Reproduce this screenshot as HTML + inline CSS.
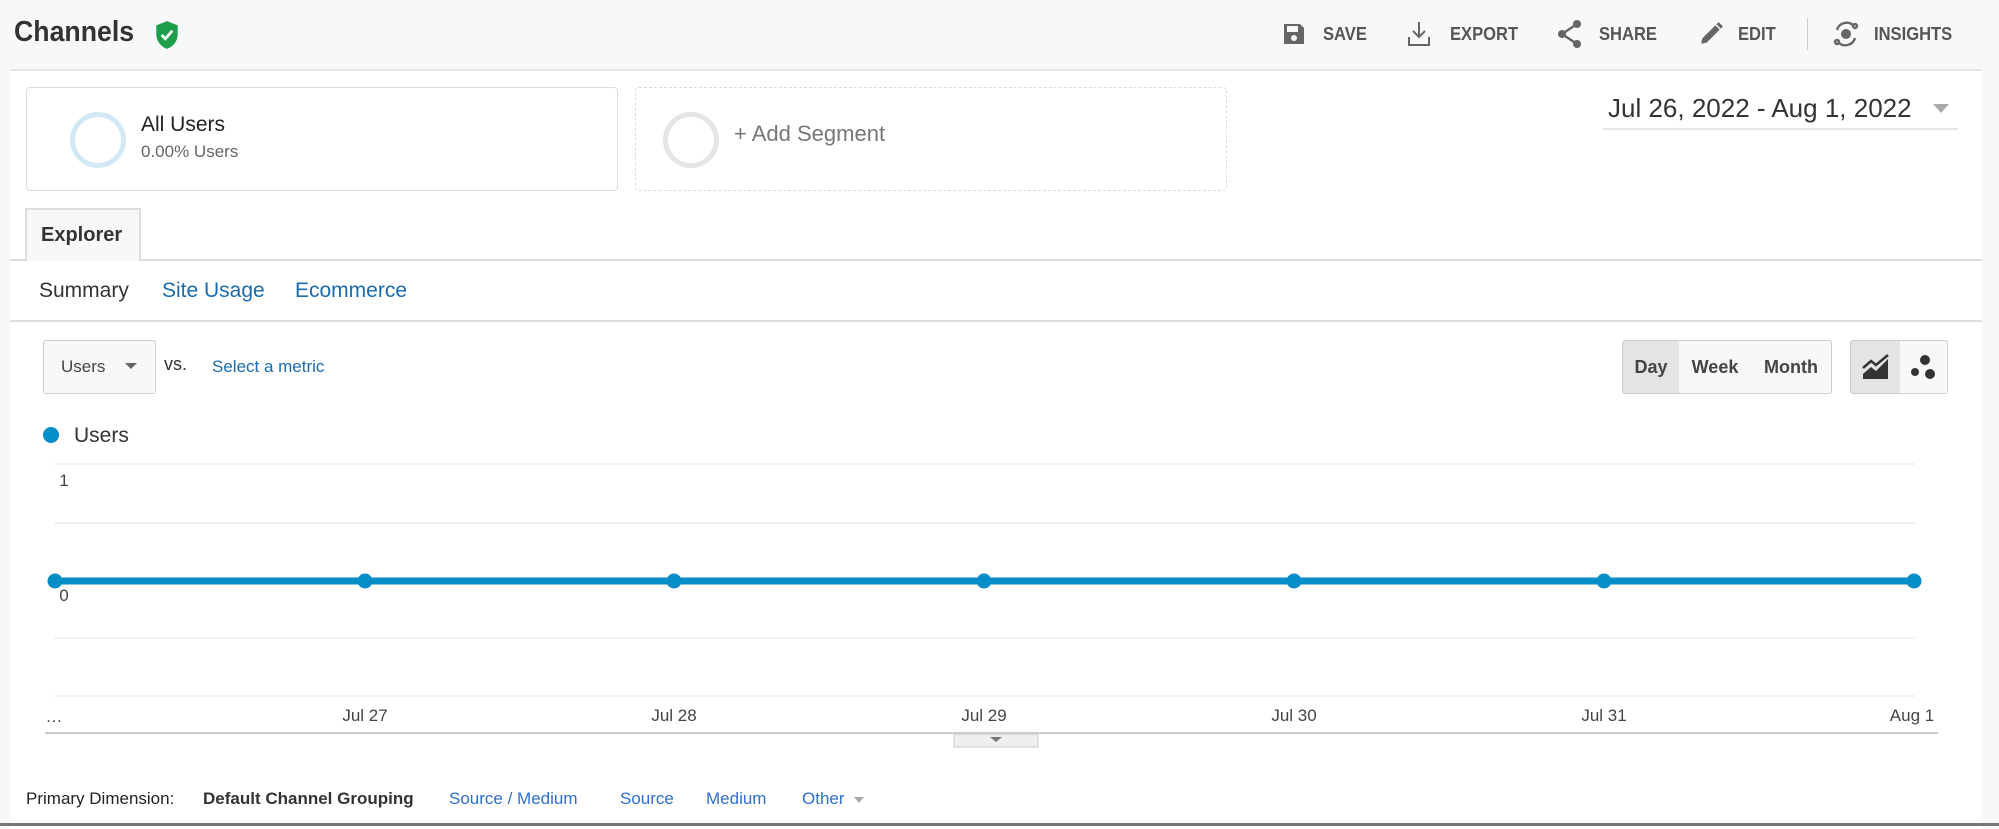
<!DOCTYPE html>
<html><head><style>
*{margin:0;padding:0;box-sizing:border-box}
body{width:1999px;height:826px;background:#f7f8fa;font-family:"Liberation Sans",sans-serif;position:relative;overflow:hidden;color:#222}
.a{position:absolute}
.hb{font-size:18px;font-weight:bold;color:#555;top:24px;transform:scaleX(.92);transform-origin:left}
.lnk{color:#1a6bb0}
.btn{position:absolute;top:340px;height:54px;border:1px solid #ccc;background:#f8f8f8;font-size:18px;font-weight:bold;color:#444;display:flex;align-items:center;justify-content:center}
</style></head><body>
<div class="a" style="left:14px;top:16px;font-size:29px;font-weight:bold;color:#333;transform:scaleX(.92);transform-origin:left">Channels</div>
<svg class="a" style="left:154px;top:20px" width="26" height="30" viewBox="0 0 24 28"><path d="M12 1L2 5v8c0 7 4.5 12 10 14 5.5-2 10-7 10-14V5z" fill="#1e9e4a"/><path d="M7 14l3.5 3.5L17 10" stroke="#fff" stroke-width="2.6" fill="none"/></svg>

<svg class="a" style="left:1282px;top:22px" width="24" height="24" viewBox="0 0 24 24"><path d="M3 2h15l4 4v16H2V2z" fill="#666"/><rect x="5" y="4" width="11" height="6" fill="#f7f8fa"/><circle cx="12" cy="16" r="3" fill="#f7f8fa"/></svg>
<div class="a hb" style="left:1323px">SAVE</div>
<svg class="a" style="left:1406px;top:20px" width="26" height="28" viewBox="0 0 26 28" fill="none" stroke="#666" stroke-width="2"><path d="M13 2v15M7 11l6 6 6-6M3 17v8h20v-8"/></svg>
<div class="a hb" style="left:1450px">EXPORT</div>
<svg class="a" style="left:1557px;top:19px" width="26" height="30" viewBox="0 0 26 30"><circle cx="20" cy="5" r="4" fill="#666"/><circle cx="5" cy="15" r="4" fill="#666"/><circle cx="20" cy="25" r="4" fill="#666"/><path d="M20 5L5 15l15 10" stroke="#666" stroke-width="2.4" fill="none"/></svg>
<div class="a hb" style="left:1599px">SHARE</div>
<svg class="a" style="left:1698px;top:21px" width="26" height="26" viewBox="0 0 24 24"><path d="M3 21l1-5L16 4l4 4L8 20z" fill="#666"/><path d="M17 3l2-2 4 4-2 2z" fill="#666"/></svg>
<div class="a hb" style="left:1738px">EDIT</div>
<div class="a" style="left:1807px;top:18px;width:1px;height:32px;background:#ccc"></div>
<svg class="a" style="left:1832px;top:20px" width="28" height="28" viewBox="0 0 28 28" fill="none" stroke="#666" stroke-width="2.4"><circle cx="14" cy="14" r="5" fill="#666" stroke="none"/><path d="M5 10a10 10 0 0 1 17-4M23 18a10 10 0 0 1-17 4"/><circle cx="23" cy="6" r="2"/><circle cx="5" cy="22" r="2"/></svg>
<div class="a hb" style="left:1874px">INSIGHTS</div>

<div class="a" style="left:10px;top:69px;width:1972px;height:760px;background:#fff;border-top:2px solid #e6e6e6"></div>
<div class="a" style="left:26px;top:87px;width:592px;height:104px;border:1px solid #ddd;border-radius:4px;background:#fff"></div>
<div class="a" style="left:70px;top:112px;width:56px;height:56px;border:5px solid #d3e8f5;border-radius:50%"></div>
<div class="a" style="left:141px;top:113px;font-size:21px">All Users</div>
<div class="a" style="left:141px;top:142px;font-size:17px;color:#666">0.00% Users</div>
<div class="a" style="left:635px;top:87px;width:592px;height:104px;border:1px dashed #ddd;border-radius:4px"></div>
<div class="a" style="left:663px;top:112px;width:56px;height:56px;border:5px solid #e5e5e5;border-radius:50%"></div>
<div class="a" style="left:734px;top:121px;font-size:22px;color:#777">+ Add Segment</div>
<div class="a" style="left:1608px;top:93px;font-size:26px;color:#333">Jul 26, 2022 - Aug 1, 2022</div>
<div class="a" style="left:1933px;top:104px;border:8px solid transparent;border-top:9px solid #aaa"></div>
<div class="a" style="left:1603px;top:128px;width:355px;height:2px;background:#e6e6e6"></div>

<div class="a" style="left:10px;top:259px;width:1972px;height:2px;background:#ddd"></div>
<div class="a" style="left:25px;top:208px;width:116px;height:53px;border:2px solid #ddd;border-bottom:none;background:#f8f8f8"></div>
<div class="a" style="left:41px;top:224px;font-size:20px;font-weight:bold;color:#333">Explorer</div>
<div class="a" style="left:39px;top:279px;font-size:21px;color:#333">Summary</div>
<div class="a lnk" style="left:162px;top:279px;font-size:21px">Site Usage</div>
<div class="a lnk" style="left:295px;top:279px;font-size:21px">Ecommerce</div>
<div class="a" style="left:10px;top:320px;width:1972px;height:2px;background:#ddd"></div>

<div class="a" style="left:43px;top:340px;width:113px;height:54px;border:1px solid #ccc;border-radius:3px;background:#f8f8f8"></div>
<div class="a" style="left:61px;top:357px;font-size:17px;color:#444">Users</div>
<div class="a" style="left:125px;top:363px;border:6px solid transparent;border-top:6px solid #666"></div>
<div class="a" style="left:164px;top:354px;font-size:18px;color:#333">vs.</div>
<div class="a lnk" style="left:212px;top:357px;font-size:17px">Select a metric</div>

<div class="btn" style="left:1622px;width:58px;background:#e4e4e4;border-radius:3px 0 0 3px">Day</div>
<div class="btn" style="left:1679px;width:73px;border-left:none">Week</div>
<div class="btn" style="left:1751px;width:81px;border-left:none;border-radius:0 3px 3px 0">Month</div>
<div class="btn" style="left:1850px;width:51px;background:#e4e4e4;border-radius:3px 0 0 3px"><svg width="30" height="26" viewBox="0 0 30 26"><path d="M2 20l8-7 5 4 12-12v20H2z" fill="#333"/><path d="M2 14l8-7 5 4 12-10" stroke="#333" stroke-width="2.5" fill="none"/></svg></div>
<div class="btn" style="left:1900px;width:48px;border-left:none;border-radius:0 3px 3px 0"><svg width="30" height="30" viewBox="0 0 30 30"><circle cx="16" cy="8" r="5" fill="#333"/><circle cx="6" cy="20" r="4" fill="#333"/><circle cx="21" cy="22" r="5" fill="#333"/></svg></div>

<div class="a" style="left:43px;top:427px;width:16px;height:16px;border-radius:50%;background:#058dc7"></div>
<div class="a" style="left:74px;top:424px;font-size:21px;color:#333">Users</div>

<svg class="a" style="left:0;top:0" width="1999" height="826">
<g stroke="#eee" stroke-width="1.5"><line x1="54" y1="464" x2="1915" y2="464"/><line x1="54" y1="523" x2="1915" y2="523"/><line x1="54" y1="638" x2="1915" y2="638"/><line x1="54" y1="696" x2="1915" y2="696"/></g>
<line x1="45" y1="733" x2="1938" y2="733" stroke="#ccc" stroke-width="2"/>
<line x1="55" y1="581" x2="1914" y2="581" stroke="#058dc7" stroke-width="7"/>
<g fill="#058dc7"><circle cx="55" cy="581" r="7.5"/><circle cx="365" cy="581" r="7.5"/><circle cx="674" cy="581" r="7.5"/><circle cx="984" cy="581" r="7.5"/><circle cx="1294" cy="581" r="7.5"/><circle cx="1604" cy="581" r="7.5"/><circle cx="1914" cy="581" r="7.5"/></g>
<g font-family="Liberation Sans" font-size="17" fill="#444" text-anchor="middle"><text x="64" y="486">1</text><text x="64" y="601">0</text><text x="54" y="722">…</text><text x="365" y="721">Jul 27</text><text x="674" y="721">Jul 28</text><text x="984" y="721">Jul 29</text><text x="1294" y="721">Jul 30</text><text x="1604" y="721">Jul 31</text><text x="1912" y="721">Aug 1</text></g>
<rect x="954" y="734" width="84" height="13" fill="#eee" stroke="#ccc"/>
<path d="M990 737h12l-6 5z" fill="#777"/>
</svg>

<div class="a" style="left:26px;top:789px;font-size:17px;color:#222">Primary Dimension:</div>
<div class="a" style="left:203px;top:789px;font-size:17px;font-weight:bold;color:#333">Default Channel Grouping</div>
<div class="a" style="left:449px;top:789px;font-size:17px;color:#2f6fcf">Source / Medium</div>
<div class="a" style="left:620px;top:789px;font-size:17px;color:#2f6fcf">Source</div>
<div class="a" style="left:706px;top:789px;font-size:17px;color:#2f6fcf">Medium</div>
<div class="a" style="left:802px;top:789px;font-size:17px;color:#2f6fcf">Other</div>
<div class="a" style="left:854px;top:797px;border:5px solid transparent;border-top:6px solid #aaa"></div>
<div class="a" style="left:0;top:823px;width:1999px;height:3px;background:#777"></div>
</body></html>
